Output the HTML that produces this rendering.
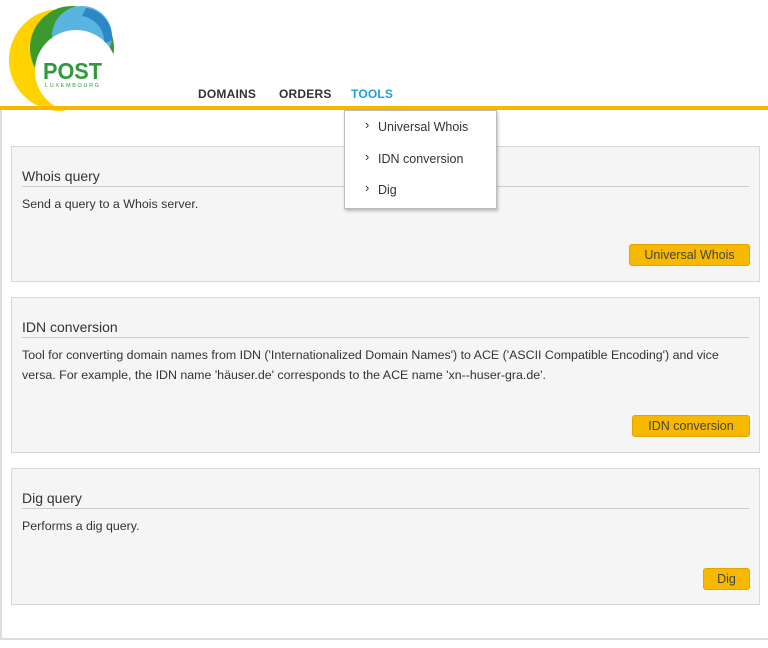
<!DOCTYPE html>
<html><head><meta charset="utf-8"><style>
*{margin:0;padding:0;box-sizing:border-box}
body{width:768px;height:648px;background:#fff;font-family:"Liberation Sans",sans-serif;position:relative;overflow:hidden;color:#333}
.nav{position:absolute;top:87px;font-size:12px;font-weight:bold;letter-spacing:.2px;color:#333}
.bar{position:absolute;left:0;top:106px;width:768px;height:4px;background:#f5b700}
.side{position:absolute;left:0;top:110px;width:2px;height:530px;background:#ddd}
.bot{position:absolute;left:0;top:638px;width:768px;height:2px;background:#ddd}
.panel{position:absolute;left:11px;width:749px;background:#f5f5f5;border:1px solid #d8d8d8}
.panel h2{position:absolute;left:10px;top:21px;right:10px;font-size:14px;font-weight:normal;color:#333;border-bottom:1px solid #ccc;padding-bottom:1px;line-height:17px}
.panel p{position:absolute;left:10px;top:47px;right:8px;font-size:12.4px;line-height:20px;color:#333}
.btn{position:absolute;right:9px;height:22px;background:#f7b800;border:1px solid #e0a500;border-radius:3px;font-size:12.5px;color:#444;text-align:center;line-height:20px}
.dd{position:absolute;left:344px;top:110px;width:153px;height:99px;background:#fff;border:1px solid #bbb;box-shadow:1px 2px 3px rgba(0,0,0,.25);font-size:12.5px;color:#333}
.dd div{position:absolute;left:33px}
.dd div:before{content:"›";position:absolute;left:-13px;top:-3px;font-size:13px}
</style></head><body>
<svg style="position:absolute;left:0;top:0" width="120" height="116" viewBox="0 0 120 116">
<circle cx="60" cy="60" r="51" fill="#ffd200"/>
<circle cx="72" cy="48" r="42" fill="#3a9a2e"/>
<circle cx="82" cy="36" r="30" fill="#5ab4e0"/>
<path d="M86 8 A30 30 0 0 1 112 40 L104 44 A26 26 0 0 0 82 16Z" fill="#2d86c6"/>
<circle cx="76" cy="71" r="41" fill="#fff"/>
<text x="43" y="79" font-family="Liberation Sans" font-weight="bold" font-size="23" fill="#2f9a3a" textLength="59" lengthAdjust="spacingAndGlyphs">POST</text>
<text x="45" y="87" font-family="Liberation Sans" font-size="5.5" fill="#2f9a3a" textLength="54">LUXEMBOURG</text>
</svg>
<div class="bar"></div>
<div class="nav" style="left:198px">DOMAINS</div>
<div class="nav" style="left:279px">ORDERS</div>
<div class="nav" style="left:351px;color:#1ea0d8">TOOLS</div>
<div class="side"></div><div class="bot"></div>
<div class="panel" style="top:146px;height:136px"><h2>Whois query</h2><p>Send a query to a Whois server.</p><div class="btn" style="top:97px;width:121px">Universal Whois</div></div>
<div class="panel" style="top:297px;height:156px"><h2>IDN conversion</h2><p>Tool for converting domain names from IDN ('Internationalized Domain Names') to ACE ('ASCII Compatible Encoding') and vice<br>versa. For example, the IDN name 'häuser.de' corresponds to the ACE name 'xn--huser-gra.de'.</p><div class="btn" style="top:117px;width:118px">IDN conversion</div></div>
<div class="panel" style="top:468px;height:137px"><h2>Dig query</h2><p>Performs a dig query.</p><div class="btn" style="top:99px;width:47px">Dig</div></div>
<div class="dd"><div style="top:9px">Universal Whois</div><div style="top:41px">IDN conversion</div><div style="top:72px">Dig</div></div>
</body></html>
